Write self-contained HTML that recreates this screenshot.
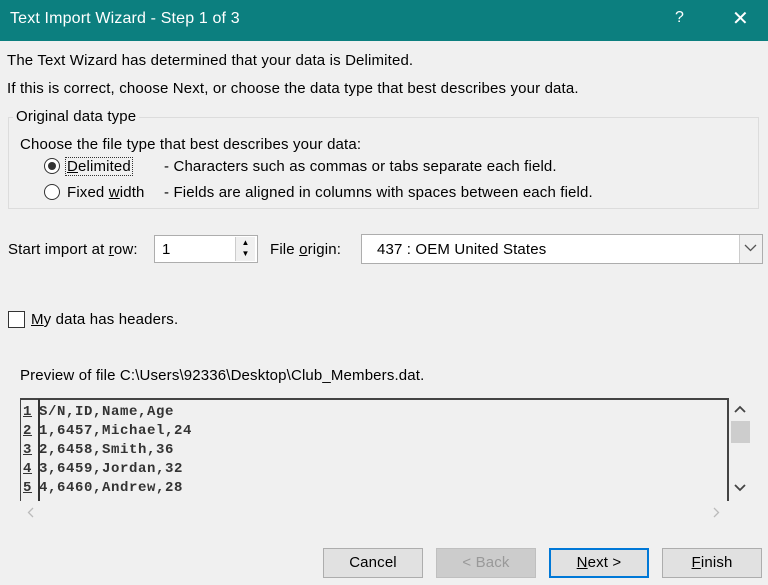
<!DOCTYPE html>
<html><head><style>
*{margin:0;padding:0;box-sizing:border-box}
body{width:768px;height:585px;background:#f0f0f0;font-family:"Liberation Sans",sans-serif;font-size:15px;letter-spacing:0.15px;color:#000;position:relative;overflow:hidden}
.a{position:absolute;white-space:nowrap}
u{text-decoration:underline}
.btn{position:absolute;top:548px;height:30px;width:100px;background:#e1e1e1;border:1px solid #adadad;text-align:center;line-height:28px;font-size:15px}
.mono{font-family:"Liberation Mono",monospace;font-size:14px;font-weight:bold;color:#333;letter-spacing:0.6px}
</style></head><body>
<div class="a" style="left:0;top:0;width:768px;height:41px;background:#0c7f7f"></div>
<div class="a" style="left:10px;top:10px;color:#fff;font-size:16px">Text Import Wizard - Step 1 of 3</div>
<div class="a" style="left:675px;top:9px;color:#fff;font-size:16px">?</div>
<div class="a" style="left:732px;top:6px;color:#fff;font-size:20px">✕</div>

<div class="a" style="left:7px;top:52px">The Text Wizard has determined that your data is Delimited.</div>
<div class="a" style="left:7px;top:80px">If this is correct, choose Next, or choose the data type that best describes your data.</div>

<div class="a" style="left:8px;top:117px;width:751px;height:92px;border:1px solid #dcdcdc"></div>
<div class="a" style="left:13px;top:108px;background:#f0f0f0;padding:0 3px">Original data type</div>
<div class="a" style="left:20px;top:136px">Choose the file type that best describes your data:</div>
<div class="a" style="left:44px;top:158px;width:16px;height:16px;border:1px solid #333;border-radius:50%;background:#fff"></div>
<div class="a" style="left:48px;top:162px;width:8px;height:8px;border-radius:50%;background:#333"></div>
<div class="a" style="left:65px;top:157px;border:1px dotted #333;padding:0 1px"><u>D</u>elimited</div>
<div class="a" style="left:164px;top:158px">- Characters such as commas or tabs separate each field.</div>
<div class="a" style="left:44px;top:184px;width:16px;height:16px;border:1px solid #333;border-radius:50%;background:#fff"></div>
<div class="a" style="left:67px;top:184px">Fixed <u>w</u>idth</div>
<div class="a" style="left:164px;top:184px">- Fields are aligned in columns with spaces between each field.</div>

<div class="a" style="left:8px;top:241px">Start import at <u>r</u>ow:</div>
<div class="a" style="left:154px;top:235px;width:104px;height:28px;border:1px solid #adadad;background:#fff"></div>
<div class="a" style="left:162px;top:241px">1</div>
<div class="a" style="left:235px;top:237px;width:20px;height:24px;border-left:1px solid #ccc;background:#f0f0f0;font-size:8px;text-align:center;line-height:11px">▲<br>▼</div>
<div class="a" style="left:270px;top:241px">File <u>o</u>rigin:</div>
<div class="a" style="left:361px;top:234px;width:402px;height:30px;border:1px solid #adadad;background:#fff"></div>
<div class="a" style="left:377px;top:241px">437 : OEM United States</div>
<div class="a" style="left:739px;top:235px;width:23px;height:28px;border-left:1px solid #ccc;background:#f0f0f0"></div>
<svg class="a" style="left:744px;top:244px" width="13" height="8"><path d="M1 1l5.5 5.5L12 1" stroke="#555" fill="none" stroke-width="1.3"/></svg>

<div class="a" style="left:8px;top:311px;width:17px;height:17px;border:1px solid #333;background:#fff"></div>
<div class="a" style="left:31px;top:311px"><u>M</u>y data has headers.</div>

<div class="a" style="left:20px;top:367px">Preview of file C:\Users\92336\Desktop\Club_Members.dat.</div>
<div class="a" style="left:20px;top:398px;width:709px;height:103px;border-top:2px solid #444;border-right:2px solid #444;border-left:1px solid #444;background:#f0f0f0"></div>
<div class="a" style="left:38px;top:399px;width:2px;height:102px;background:#333"></div>
<div class="a mono" style="left:23px;top:403px;line-height:19px">
<div><u>1</u></div><div><u>2</u></div><div><u>3</u></div><div><u>4</u></div><div><u>5</u></div>
</div>
<div class="a mono" style="left:39px;top:403px;line-height:19px">
<div>S/N,ID,Name,Age</div><div>1,6457,Michael,24</div><div>2,6458,Smith,36</div><div>3,6459,Jordan,32</div><div>4,6460,Andrew,28</div>
</div>
<svg class="a" style="left:734px;top:405px" width="12" height="8"><path d="M1 7l5-5 5 5" stroke="#444" fill="none" stroke-width="1.8"/></svg>
<div class="a" style="left:731px;top:421px;width:19px;height:22px;background:#cdcdcd"></div>
<svg class="a" style="left:734px;top:484px" width="12" height="8"><path d="M1 1l5 5 5-5" stroke="#444" fill="none" stroke-width="1.8"/></svg>
<svg class="a" style="left:27px;top:507px" width="7" height="11"><path d="M6 1L1.5 5.5 6 10" stroke="#bbb" fill="none" stroke-width="1.3"/></svg>
<svg class="a" style="left:713px;top:507px" width="7" height="11"><path d="M1 1l4.5 4.5L1 10" stroke="#bbb" fill="none" stroke-width="1.3"/></svg>

<div class="btn" style="left:323px">Cancel</div>
<div class="btn" style="left:436px;background:#cccccc;border-color:#bfbfbf;color:#999">&lt; Back</div>
<div class="btn" style="left:549px;border:2px solid #0078d7;line-height:26px"><u>N</u>ext &gt;</div>
<div class="btn" style="left:662px"><u>F</u>inish</div>
</body></html>
